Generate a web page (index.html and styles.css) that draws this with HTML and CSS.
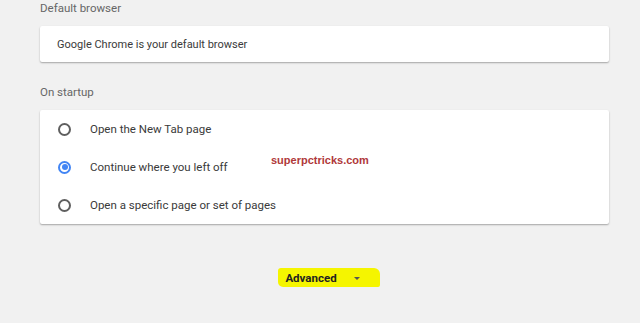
FILE: index.html
```html
<!DOCTYPE html>
<html lang="en">
<head>
  <meta charset="UTF-8">
  <meta name="viewport" content="width=device-width, initial-scale=1.0">
  <title>Settings</title>
  <link rel="stylesheet" href="styles.css">
</head>
<body>
  <div class="page">
    <!-- Default browser -->
    <h2 class="section-title first">Default browser</h2>
    <div class="card">
      <div class="row plain">Google Chrome is your default browser</div>
    </div>

    <!-- On startup -->
    <h2 class="section-title">On startup</h2>
    <div class="card startup">
      <div class="row">
        <span class="radio"></span>
        <span class="label">Open the New Tab page</span>
      </div>
      <div class="row">
        <span class="radio checked"></span>
        <span class="label">Continue where you left off</span>
      </div>
      <div class="row">
        <span class="radio"></span>
        <span class="label">Open a specific page or set of pages</span>
      </div>
      <!-- watermark sits over the card -->
      <span class="watermark">superpctricks.com</span>
    </div>

    <div class="advanced-wrap">
      <span class="advanced">Advanced <span class="caret"></span></span>
    </div>
  </div>
</body>
</html>
```

FILE: styles.css
```css
body {
  margin: 0;
  padding: 0;
  background: #f1f1f1;
  font-family: Roboto, "Liberation Sans", sans-serif;
  color: #3a3a3a;
}
.page {
  width: 569px;
  margin-left: 40px;
}
.section-title {
  font-size: 11.5px;
  font-weight: normal;
  color: #666;
  margin: 0;
  height: 16px;
  line-height: 16px;
  padding: 22px 0 10px;
}
.section-title.first {
  padding-top: 0;
}
.card {
  background: #fff;
  border-radius: 2px;
  box-shadow: 0 1px 2px rgba(0, 0, 0, 0.25), 0 1px 1px rgba(0, 0, 0, 0.08);
}
.startup {
  position: relative;
}
.row {
  display: flex;
  align-items: center;
  height: 38px;
  padding-left: 18px;
  font-size: 11.5px;
  color: #3a3a3a;
}
.row.plain {
  height: 36px;
  padding-left: 17px;
  font-size: 11px;
}
.radio {
  width: 9px;
  height: 9px;
  border: 2px solid #5f5f5f;
  border-radius: 50%;
  box-sizing: content-box;
  position: relative;
}
.radio.checked {
  border-color: #4285f4;
}
.radio.checked::after {
  content: "";
  position: absolute;
  left: 1.5px;
  top: 1.5px;
  width: 6px;
  height: 6px;
  border-radius: 50%;
  background: #4285f4;
}
.label {
  margin-left: 19px;
}
.watermark {
  position: absolute;
  left: 231px;
  top: 43px;
  font-family: "Liberation Sans", Arial, sans-serif;
  font-weight: bold;
  font-size: 11px;
  line-height: 14px;
  color: #b0393a;
}
.advanced-wrap {
  display: flex;
  justify-content: center;
  padding-top: 44px;
  padding-left: 9px;
}
.advanced {
  display: inline-flex;
  align-items: center;
  background: #f5f500;
  border-radius: 3px 6px 2px 5px;
  padding: 3px 20px 2px 7px;
  font-size: 11.5px;
  font-weight: bold;
  color: #222;
  height: 14px;
}
.caret {
  margin-left: 17px;
  width: 0;
  height: 0;
  border-left: 3px solid transparent;
  border-right: 3px solid transparent;
  border-top: 3px solid #555;
}
```
